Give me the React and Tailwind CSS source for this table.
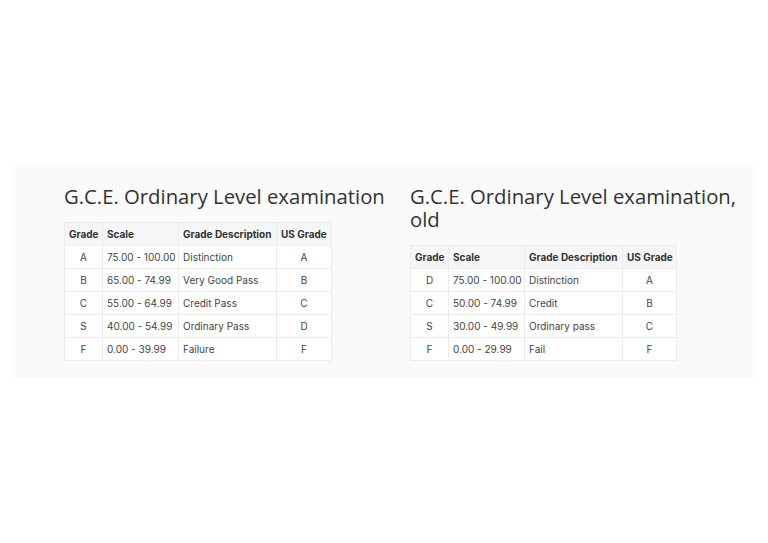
import React from "react";

const t1 = [
  ["A", "75.00 - 100.00", "Distinction", "A"],
  ["B", "65.00 - 74.99", "Very Good Pass", "B"],
  ["C", "55.00 - 64.99", "Credit Pass", "C"],
  ["S", "40.00 - 54.99", "Ordinary Pass", "D"],
  ["F", "0.00 - 39.99", "Failure", "F"],
];
const t2 = [
  ["D", "75.00 - 100.00", "Distinction", "A"],
  ["C", "50.00 - 74.99", "Credit", "B"],
  ["S", "30.00 - 49.99", "Ordinary pass", "C"],
  ["F", "0.00 - 29.99", "Fail", "F"],
];

function GradeTable({ rows, lastW }) {
  return (
    <table
      className="table-fixed border-collapse text-[10px] text-[#444]"
      style={{ fontFamily: "Inter, 'Liberation Sans', sans-serif", width: 38 + 76 + 98 + lastW }}
    >
      <colgroup>
        <col className="w-[38px]" />
        <col className="w-[76px]" />
        <col className="w-[98px]" />
        <col style={{ width: lastW }} />
      </colgroup>
      <thead>
        <tr className="h-[23px] bg-[#f6f6f6]">
          <th className="border border-[#ececec] px-[4px] text-left font-bold text-[#333]">Grade</th>
          <th className="border border-[#ececec] px-[4px] text-left font-bold text-[#333]">Scale</th>
          <th className="border border-[#ececec] px-[4px] text-left font-bold text-[#333] whitespace-nowrap">Grade Description</th>
          <th className="border border-[#ececec] px-[4px] text-left font-bold text-[#333] whitespace-nowrap">US Grade</th>
        </tr>
      </thead>
      <tbody>
        {rows.map((r, i) => (
          <tr key={i} className="h-[23px] bg-white">
            <td className="border border-[#ececec] px-[4px] text-center">{r[0]}</td>
            <td className="border border-[#ececec] px-[4px] whitespace-nowrap">{r[1]}</td>
            <td className="border border-[#ececec] px-[4px] whitespace-nowrap">{r[2]}</td>
            <td className="border border-[#ececec] px-[4px] text-center">{r[3]}</td>
          </tr>
        ))}
      </tbody>
    </table>
  );
}

export default function App() {
  return (
    <div className="h-[543px] w-[768px] bg-white overflow-hidden">
      <div className="mx-[13px] mt-[166px] h-[211px] bg-[#fafafa] flex pl-[51px] pt-[19px]">
        <div className="w-[346px] flex flex-col">
          <h2
            className="text-[20.3px] leading-[23px] text-[#333] whitespace-nowrap"
            style={{ fontFamily: "'Open Sans', 'Noto Sans', sans-serif" }}
          >
            G.C.E. Ordinary Level examination
          </h2>
          <div className="mt-[14px]">
            <GradeTable rows={t1} lastW={55} />
          </div>
        </div>
        <div className="w-[335px] flex flex-col">
          <h2
            className="text-[20.3px] leading-[23px] text-[#333]"
            style={{ fontFamily: "'Open Sans', 'Noto Sans', sans-serif" }}
          >
            G.C.E. Ordinary Level examination, old
          </h2>
          <div className="mt-[14px]">
            <GradeTable rows={t2} lastW={54} />
          </div>
        </div>
      </div>
    </div>
  );
}
